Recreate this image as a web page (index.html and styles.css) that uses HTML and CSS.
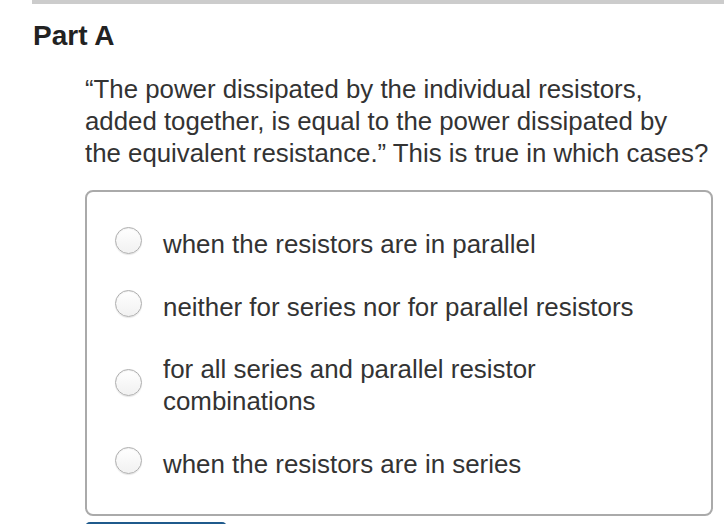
FILE: index.html
```html
<!DOCTYPE html>
<html lang="en">
<head>
<meta charset="utf-8">
<title>Part A</title>
<link rel="stylesheet" href="styles.css">
</head>
<body>
<div class="topbar"></div>
<h2 class="part-title">Part A</h2>
<div class="content">
  <p class="question">“The power dissipated by the individual resistors,<br>added together, is equal to the power dissipated by<br>the equivalent resistance.” This is true in which cases?</p>
  <div class="choices">
    <label class="choice"><span class="radio"></span><span class="choice-text">when the resistors are in parallel</span></label>
    <label class="choice"><span class="radio"></span><span class="choice-text">neither for series nor for parallel resistors</span></label>
    <label class="choice"><span class="radio"></span><span class="choice-text">for all series and parallel resistor<br>combinations</span></label>
    <label class="choice"><span class="radio"></span><span class="choice-text">when the resistors are in series</span></label>
  </div>
  <div class="submit-btn"></div>
</div>
</body>
</html>
```
FILE: styles.css
```css
html, body {
  margin: 0;
  padding: 0;
  background: #ffffff;
  font-family: "Liberation Sans", Arial, Helvetica, sans-serif;
  color: #333333;
}
body {
  width: 724px;
  height: 524px;
  overflow: hidden;
}
.topbar {
  margin-left: 32px;
  height: 4px;
  background: #cccccc;
}
.part-title {
  margin: 16px 0 0 33px;
  font-size: 28px;
  line-height: 32px;
  font-weight: bold;
  color: #222222;
}
.content {
  margin-left: 85px;
  width: 628px;
}
.question {
  margin: 21px 0 0 0;
  font-size: 25.8px;
  line-height: 32px;
  white-space: nowrap;
  color: #333333;
}
.choices {
  margin-top: 21px;
  border: 2px solid #aaaaaa;
  border-radius: 8px;
  padding: 35px 20px 34px 28px;
  display: flex;
  flex-direction: column;
  gap: 30px;
}
.choice {
  display: flex;
  align-items: center;
  gap: 21px;
  font-size: 25.9px;
  line-height: 32px;
  color: #333333;
}
.radio {
  flex: none;
  width: 25px;
  height: 25px;
  margin-bottom: 6px;
  border: 1px solid #aeaeae;
  border-radius: 50%;
  background: linear-gradient(#ffffff, #f1f1f1);
  box-shadow: inset 0 1px 1px rgba(0,0,0,0.06), 0 1px 1px rgba(0,0,0,0.1);
}
.submit-btn {
  margin-top: 6px;
  width: 142px;
  height: 30px;
  background: #1f5a8c;
  border-radius: 5px 5px 0 0;
}
```
